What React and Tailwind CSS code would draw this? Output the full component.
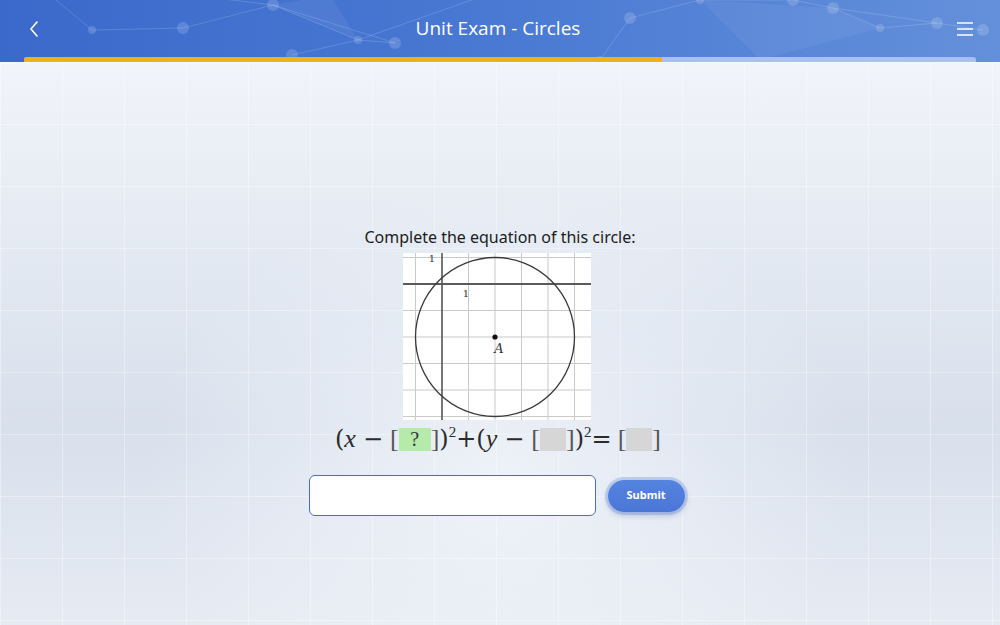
import React from 'react';

function HeaderNetwork() {
  const pts = [
    [92, 30], [183, 28], [273, 5], [358, 40], [395, 43], [630, 18], [700, 0], [793, 0], [833, 8], [880, 28], [937, 23], [983, 30], [50, -5], [150, -10], [500, -10], [600, 60], [292, 55]
  ];
  const lines = [
    [0, 1], [1, 2], [2, 3], [3, 4], [2, 4], [5, 6], [6, 7], [7, 8], [8, 9], [9, 10], [10, 11], [12, 0], [13, 2], [14, 3], [5, 15], [16, 3], [8, 10]
  ];
  return (
    <svg className="absolute inset-0 h-full w-full" viewBox="0 0 1000 62" preserveAspectRatio="none">
      {lines.map(([a, b], i) => (
        <line key={i} x1={pts[a][0]} y1={pts[a][1]} x2={pts[b][0]} y2={pts[b][1]} stroke="rgba(255,255,255,0.2)" strokeWidth="0.8" />
      ))}
      <polygon points="273,5 330,-5 358,40" fill="rgba(255,255,255,0.06)" />
      <polygon points="700,0 833,8 880,28 760,60" fill="rgba(255,255,255,0.05)" />
      {pts.map(([x, y], i) => (
        <circle key={i} cx={x} cy={y} r={i % 3 === 0 ? 4 : 6} fill="rgba(255,255,255,0.16)" />
      ))}
    </svg>
  );
}

function CircleGraph() {
  const step = 26.5;
  const xs = [12.5, 39, 65.5, 92, 118.5, 145, 171.5];
  const ys = [4.5, 31, 57.5, 84, 110.5, 137, 163.5];
  return (
    <svg width="188" height="167" viewBox="0 0 188 167" className="block bg-white">
      {xs.map((x, i) => (
        <line key={'v' + i} x1={x} y1="0" x2={x} y2="167" stroke="#c9c9c9" strokeWidth="1" />
      ))}
      {ys.map((y, i) => (
        <line key={'h' + i} x1="0" y1={y} x2="188" y2={y} stroke="#c9c9c9" strokeWidth="1" />
      ))}
      <line x1="39" y1="0" x2="39" y2="167" stroke="#5a5a5a" strokeWidth="1.6" />
      <line x1="0" y1="31" x2="188" y2="31" stroke="#5a5a5a" strokeWidth="1.8" />
      <circle cx="92" cy="84" r={step * 3} fill="none" stroke="#3a3a3a" strokeWidth="1.3" />
      <circle cx="92" cy="84" r="2.6" fill="#111" />
      <text x="29" y="9" fontSize="10" fontFamily="'DejaVu Serif', serif" fill="#333" textAnchor="middle">1</text>
      <text x="63" y="44" fontSize="10" fontFamily="'DejaVu Serif', serif" fill="#333" textAnchor="middle">1</text>
      <text x="96" y="100" fontSize="13" fontStyle="italic" fontFamily="'DejaVu Serif', serif" fill="#333" textAnchor="middle">A</text>
    </svg>
  );
}

export default function App() {
  return (
    <div className="flex h-[625px] w-[1000px] flex-col overflow-hidden font-['Open_Sans',sans-serif]">
      {/* HEADER */}
      <div className="relative h-[62px] shrink-0 bg-[linear-gradient(90deg,#3a69cb_0%,#4a79d3_50%,#6490da_100%)]">
        <HeaderNetwork />
        <div className="relative flex h-[57px] items-center justify-between px-[26px]">
          <svg width="12" height="18" viewBox="0 0 12 18" className="ml-[2px]">
            <path d="M9 2 L3 9 L9 16" fill="none" stroke="white" strokeWidth="1.6" strokeLinecap="round" strokeLinejoin="round" />
          </svg>
          <div className="text-[19px] text-white">Unit Exam - Circles</div>
          <svg width="18" height="16" viewBox="0 0 18 16">
            <path d="M1 2 H17 M1 8 H17 M1 14 H17" stroke="white" strokeWidth="1.4" />
          </svg>
        </div>
        <div className="relative mx-[24px] flex h-[5px] overflow-hidden rounded-t-[3px] bg-[#a9c1ee]">
          <div className="h-full w-[638px] bg-[#e9b418]" />
        </div>
      </div>

      {/* CONTENT */}
      <div className="flex flex-1 flex-col items-center bg-[linear-gradient(90deg,rgba(255,255,255,0.35)_1px,transparent_1px),linear-gradient(180deg,rgba(255,255,255,0.35)_1px,transparent_1px),radial-gradient(ellipse_at_50%_75%,rgba(240,244,250,0.9)_0%,transparent_50%),linear-gradient(180deg,#f1f4f9_0%,#dfe6f0_45%,#d8e0ec_65%,#e6ebf3_100%)] [background-size:62px_62px,62px_62px,100%_100%,100%_100%] pt-[165px]">
        <div className="text-[16px] leading-[20px] text-[#1c1c1c] font-['Noto_Sans',sans-serif]">
          Complete the equation of this circle:
        </div>
        <div className="mt-[6px] ml-[-6px]">
          <CircleGraph />
        </div>
        <div className="mt-[4px] ml-[-4px] flex items-center text-[24px] leading-[30px] text-[#2b2b2b] font-['DejaVu_Serif',serif]">
          <span>(</span>
          <span className="italic font-['Liberation_Serif',serif] text-[26px]">x</span>
          <span className="mx-[7px]">−</span>
          <span className="font-['Liberation_Serif',serif] text-[26px] text-[#555]">[</span>
          <span className="flex h-[23px] w-[32px] items-center justify-center bg-[#b6eaaa] text-[20px] font-['Liberation_Serif',serif] text-[#333]">?</span>
          <span className="font-['Liberation_Serif',serif] text-[26px] text-[#555]">]</span>
          <span>)</span>
          <span className="relative -top-[7px] text-[15px] font-['Liberation_Serif',serif]">2</span>
          <span>+(</span>
          <span className="italic font-['Liberation_Serif',serif] text-[26px]">y</span>
          <span className="mx-[7px]">−</span>
          <span className="font-['Liberation_Serif',serif] text-[26px] text-[#555]">[</span>
          <span className="h-[23px] w-[26px] bg-[#d6d6d6]" />
          <span className="font-['Liberation_Serif',serif] text-[26px] text-[#555]">]</span>
          <span>)</span>
          <span className="relative -top-[7px] text-[15px] font-['Liberation_Serif',serif]">2</span>
          <span>=</span>
          <span className="ml-[6px] font-['Liberation_Serif',serif] text-[26px] text-[#555]">[</span>
          <span className="h-[23px] w-[26px] bg-[#d6d6d6]" />
          <span className="font-['Liberation_Serif',serif] text-[26px] text-[#555]">]</span>
        </div>
        <div className="mt-[21px] ml-[-7px] flex items-center gap-[12px]">
          <input className="h-[41px] w-[287px] rounded-[6px] border border-[#4b6fb5] bg-white outline-none" />
          <button className="h-[32px] w-[77px] rounded-full bg-[linear-gradient(180deg,#5583e0,#4b76d6)] text-[11px] font-bold text-white shadow-[0_0_0_3px_rgba(120,150,220,0.35),0_3px_6px_rgba(60,90,160,0.35)] font-['Noto_Sans',sans-serif]">
            Submit
          </button>
        </div>
      </div>
    </div>
  );
}
